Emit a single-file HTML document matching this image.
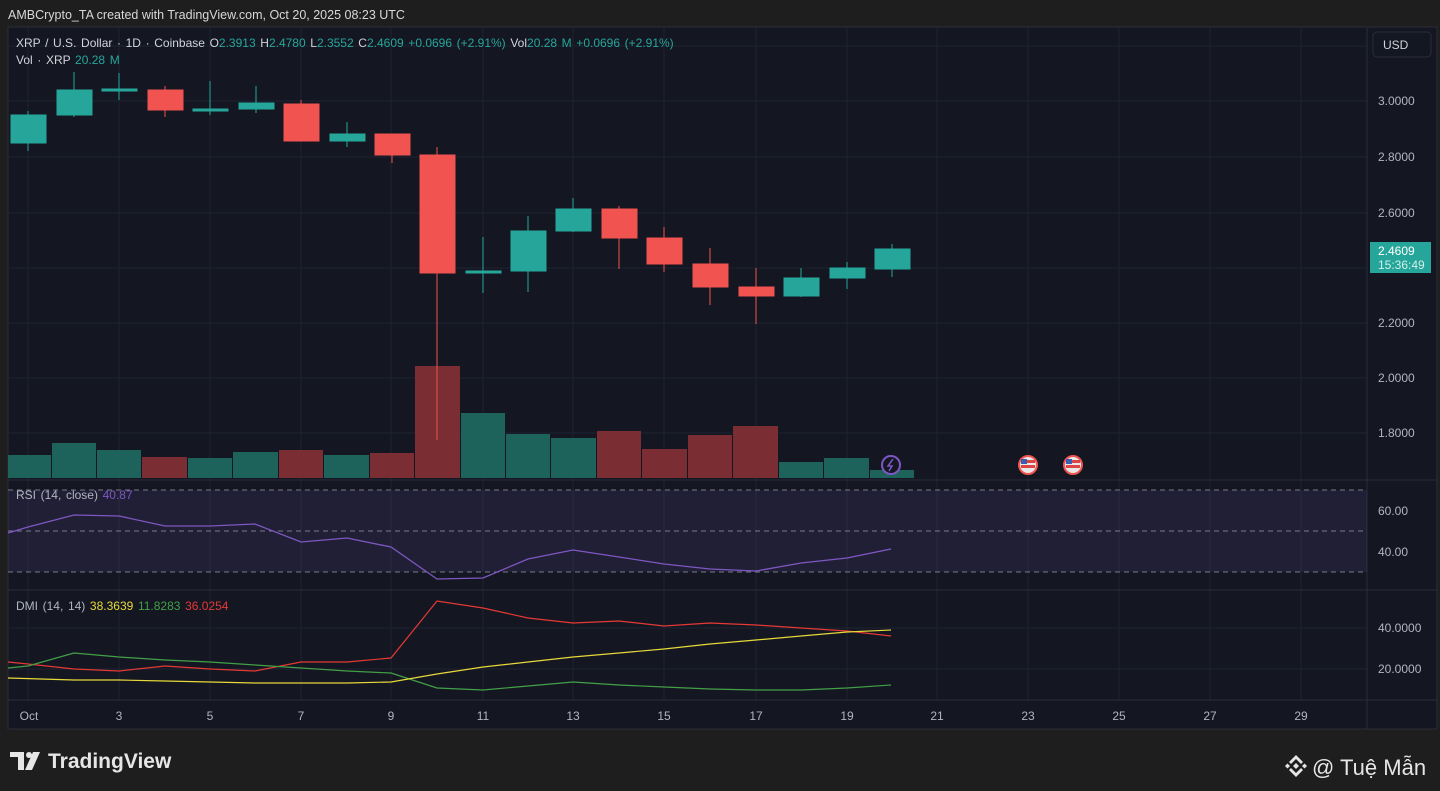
<!DOCTYPE html>
<html><head><meta charset="utf-8"><style>
html,body{margin:0;padding:0;width:1440px;height:791px;background:#1e1e1f;overflow:hidden;font-family:"Liberation Sans",sans-serif}
svg{position:absolute;left:0;top:0}
</style></head><body>
<svg width="1440" height="791" viewBox="0 0 1440 791" xmlns="http://www.w3.org/2000/svg" font-family="Liberation Sans, sans-serif">
<rect x="0" y="0" width="1440" height="791" fill="#1e1e1f"/>
<text x="8" y="19" font-size="12.5" fill="#d8d8d8">AMBCrypto_TA created with TradingView.com, Oct 20, 2025 08:23 UTC</text>
<rect x="8" y="27" width="1429" height="702" fill="#141722" stroke="#2a2d36"/>
<!-- grid -->
<g stroke="#1e2230" stroke-width="1">
<line x1="28" y1="28" x2="28" y2="700"/><line x1="119" y1="28" x2="119" y2="700"/><line x1="210" y1="28" x2="210" y2="700"/><line x1="301" y1="28" x2="301" y2="700"/><line x1="391" y1="28" x2="391" y2="700"/><line x1="483" y1="28" x2="483" y2="700"/><line x1="573" y1="28" x2="573" y2="700"/><line x1="664" y1="28" x2="664" y2="700"/><line x1="756" y1="28" x2="756" y2="700"/><line x1="847" y1="28" x2="847" y2="700"/><line x1="937" y1="28" x2="937" y2="700"/><line x1="1028" y1="28" x2="1028" y2="700"/><line x1="1119" y1="28" x2="1119" y2="700"/><line x1="1210" y1="28" x2="1210" y2="700"/><line x1="1301" y1="28" x2="1301" y2="700"/>
<line x1="8" y1="46" x2="1367" y2="46"/><line x1="8" y1="101" x2="1367" y2="101"/><line x1="8" y1="157" x2="1367" y2="157"/><line x1="8" y1="213" x2="1367" y2="213"/><line x1="8" y1="268" x2="1367" y2="268"/><line x1="8" y1="323" x2="1367" y2="323"/><line x1="8" y1="378" x2="1367" y2="378"/><line x1="8" y1="433" x2="1367" y2="433"/>
<line x1="8" y1="628" x2="1367" y2="628"/><line x1="8" y1="669" x2="1367" y2="669"/>
</g>
<g stroke="#2a2e39"><line x1="8" y1="480" x2="1437" y2="480"/><line x1="8" y1="590" x2="1437" y2="590"/><line x1="8" y1="700" x2="1437" y2="700"/><line x1="1367" y1="28" x2="1367" y2="729"/></g>
<text x="16" y="47" font-size="12" fill="#d1d4dc" word-spacing="1.3">XRP / U.S. Dollar · 1D · Coinbase <tspan>O</tspan><tspan fill="#26a69a">2.3913</tspan> H<tspan fill="#26a69a">2.4780</tspan> L<tspan fill="#26a69a">2.3552</tspan> C<tspan fill="#26a69a">2.4609 +0.0696 (+2.91%)</tspan> Vol<tspan fill="#26a69a">20.28 M +0.0696 (+2.91%)</tspan></text>
<text x="16" y="64" font-size="12" fill="#d1d4dc" word-spacing="1.3">Vol · XRP <tspan fill="#26a69a">20.28 M</tspan></text>
<rect x="1373" y="32" width="58" height="25" rx="4" fill="#131722" stroke="#2a2e39"/>
<text x="1383" y="49" font-size="12" fill="#d1d4dc">USD</text>
<g font-size="12" fill="#b2b5be">
<text x="1378" y="105">3.0000</text><text x="1378" y="161">2.8000</text><text x="1378" y="217">2.6000</text><text x="1378" y="327">2.2000</text><text x="1378" y="382">2.0000</text><text x="1378" y="437">1.8000</text>
<text x="1378" y="515">60.00</text><text x="1378" y="556">40.00</text>
<text x="1378" y="632">40.0000</text><text x="1378" y="673">20.0000</text>
</g>
<rect x="1370" y="242" width="61" height="31" fill="#26a69a"/>
<text x="1378" y="255" font-size="12" fill="#fff">2.4609</text>
<text x="1378" y="269" font-size="12" fill="#d0f0ec">15:36:49</text>
<!-- volume -->
<g>
<rect x="8" y="455" width="43" height="23" fill="#1e625c"/><rect x="52" y="443" width="44" height="35" fill="#1e625c"/><rect x="97" y="450" width="44" height="28" fill="#1e625c"/><rect x="142" y="457" width="45" height="21" fill="#7a2e33"/><rect x="188" y="458" width="44" height="20" fill="#1e625c"/><rect x="233" y="452" width="45" height="26" fill="#1e625c"/><rect x="279" y="450" width="44" height="28" fill="#7a2e33"/><rect x="324" y="455" width="45" height="23" fill="#1e625c"/><rect x="370" y="453" width="44" height="25" fill="#7a2e33"/><rect x="415" y="366" width="45" height="112" fill="#7a2e33"/><rect x="461" y="413" width="44" height="65" fill="#1e625c"/><rect x="506" y="434" width="44" height="44" fill="#1e625c"/><rect x="551" y="438" width="45" height="40" fill="#1e625c"/><rect x="597" y="431" width="44" height="47" fill="#7a2e33"/><rect x="642" y="449" width="45" height="29" fill="#7a2e33"/><rect x="688" y="435" width="44" height="43" fill="#7a2e33"/><rect x="733" y="426" width="45" height="52" fill="#7a2e33"/><rect x="779" y="462" width="44" height="16" fill="#1e625c"/><rect x="824" y="458" width="45" height="20" fill="#1e625c"/><rect x="870" y="470" width="44" height="8" fill="#1e625c"/>
</g>
<!-- candles -->
<g stroke-width="1">
<g stroke="#26a69a" fill="#26a69a">
<line x1="28" y1="111" x2="28" y2="151"/><rect x="11" y="115" width="35" height="28"/>
<line x1="74" y1="72" x2="74" y2="117"/><rect x="57" y="90" width="35" height="25"/>
<line x1="119" y1="73" x2="119" y2="100"/><rect x="102" y="89" width="35" height="2"/>
<line x1="210" y1="81" x2="210" y2="115"/><rect x="193" y="109" width="35" height="2"/>
<line x1="256" y1="86" x2="256" y2="113"/><rect x="239" y="103" width="35" height="6"/>
<line x1="347" y1="122" x2="347" y2="147"/><rect x="330" y="134" width="35" height="7"/>
<line x1="483" y1="237" x2="483" y2="293"/><rect x="466" y="271" width="35" height="2"/>
<line x1="528" y1="216" x2="528" y2="292"/><rect x="511" y="231" width="35" height="40"/>
<line x1="573" y1="198" x2="573" y2="232"/><rect x="556" y="209" width="35" height="22"/>
<line x1="801" y1="268" x2="801" y2="297"/><rect x="784" y="278" width="35" height="18"/>
<line x1="847" y1="262" x2="847" y2="289"/><rect x="830" y="268" width="35" height="10"/>
<line x1="892" y1="244" x2="892" y2="277"/><rect x="875" y="249" width="35" height="20"/>
</g>
<g stroke="#f05350" fill="#f05350">
<line x1="165" y1="86" x2="165" y2="117"/><rect x="148" y="90" width="35" height="20"/>
<line x1="301" y1="100" x2="301" y2="141"/><rect x="284" y="104" width="35" height="37"/>
<line x1="392" y1="134" x2="392" y2="163"/><rect x="375" y="134" width="35" height="21"/>
<line x1="437" y1="147" x2="437" y2="440"/><rect x="420" y="155" width="35" height="118"/>
<line x1="619" y1="206" x2="619" y2="269"/><rect x="602" y="209" width="35" height="29"/>
<line x1="664" y1="227" x2="664" y2="272"/><rect x="647" y="238" width="35" height="26"/>
<line x1="710" y1="248" x2="710" y2="305"/><rect x="693" y="264" width="35" height="23"/>
<line x1="756" y1="268" x2="756" y2="324"/><rect x="739" y="287" width="35" height="9"/>
</g>
</g>
<!-- event icons -->
<circle cx="891" cy="465" r="9" fill="#141722" stroke="#7e57c2" stroke-width="2"/><path d="M893 459 L888 466 L892 466 L889 471" stroke="#7e57c2" fill="none" stroke-width="1.5"/>
<circle cx="1028" cy="465" r="9" fill="#e8e8e8" stroke="#f05350" stroke-width="2"/><rect x="1021" y="460" width="14" height="3" fill="#d44"/><rect x="1021" y="465" width="14" height="3" fill="#d44"/><rect x="1021" y="459" width="6" height="5" fill="#3a5fb0"/>
<circle cx="1073" cy="465" r="9" fill="#e8e8e8" stroke="#f05350" stroke-width="2"/><rect x="1066" y="460" width="14" height="3" fill="#d44"/><rect x="1066" y="465" width="14" height="3" fill="#d44"/><rect x="1066" y="459" width="6" height="5" fill="#3a5fb0"/>
<!-- RSI -->
<rect x="8" y="490" width="1359" height="82" fill="#7e57c2" fill-opacity="0.12"/>
<g stroke="#787b86" stroke-dasharray="5,4" stroke-width="1"><line x1="8" y1="490" x2="1367" y2="490"/><line x1="8" y1="531" x2="1367" y2="531"/><line x1="8" y1="572" x2="1367" y2="572"/></g>
<polyline fill="none" stroke="#7e57c2" stroke-width="1.3" points="8,533 28,527 74,515 119,516 165,526 210,526 255,524 301,542 347,538 391,547 437,579 483,578 528,559 573,550 619,557 664,564 710,569 756,571 801,563 847,558 891,549"/>
<text x="16" y="499" font-size="12" fill="#b2b5be" word-spacing="1.3">RSI (14, close) <tspan fill="#7e57c2">40.87</tspan></text>
<!-- DMI -->
<text x="16" y="610" font-size="12" fill="#b2b5be" word-spacing="1.3">DMI (14, 14) <tspan fill="#e8d93a">38.3639</tspan> <tspan fill="#43a047">11.8283</tspan> <tspan fill="#e53935">36.0254</tspan></text>
<polyline fill="none" stroke="#e53935" stroke-width="1.2" points="8,662 28,664 74,669 119,671 165,666 210,669 255,671 301,662 347,662 391,658 437,601 483,608 528,618 573,623 619,621 664,626 710,623 756,625 801,628 847,631 891,636"/>
<polyline fill="none" stroke="#43a047" stroke-width="1.2" points="8,668 28,666 74,653 119,657 165,660 210,662 255,665 301,668 347,671 391,673 437,688 483,690 528,686 573,682 619,685 664,687 710,689 756,690 801,690 847,688 891,685"/>
<polyline fill="none" stroke="#e8d93a" stroke-width="1.2" points="8,678 74,680 119,680 165,681 210,682 255,683 301,683 347,683 391,682 437,674 483,667 528,662 573,657 619,653 664,649 710,644 756,640 801,636 847,632 891,630"/>
<!-- time axis -->
<g font-size="12" fill="#b2b5be" text-anchor="middle">
<text x="29" y="720">Oct</text><text x="119" y="720">3</text><text x="210" y="720">5</text><text x="301" y="720">7</text><text x="391" y="720">9</text><text x="483" y="720">11</text><text x="573" y="720">13</text><text x="664" y="720">15</text><text x="756" y="720">17</text><text x="847" y="720">19</text><text x="937" y="720">21</text><text x="1028" y="720">23</text><text x="1119" y="720">25</text><text x="1210" y="720">27</text><text x="1301" y="720">29</text>
</g>
<!-- footer -->
<path d="M10 752 H24 V770 H18 V757 H10 Z" fill="#e6e6e6"/><circle cx="29" cy="755" r="3" fill="#e6e6e6"/><path d="M33 752 H40 L32 770 H25 Z" fill="#e6e6e6"/>
<text x="48" y="768" font-size="21" font-weight="bold" fill="#e6e6e6">TradingView</text>
<g fill="#e6e6e6">
<path d="M1296 755 L1303 762 L1301 764 L1296 759 L1291 764 L1289 762 Z"/>
<path d="M1296 777 L1303 770 L1301 768 L1296 773 L1291 768 L1289 770 Z"/>
<path d="M1296 763 L1299 766 L1296 769 L1293 766 Z"/>
<path d="M1285 766 L1287.5 763.5 L1290 766 L1287.5 768.5 Z"/>
<path d="M1302 766 L1304.5 763.5 L1307 766 L1304.5 768.5 Z"/>
</g>
<text x="1312" y="775" font-size="22" fill="#e6e6e6">@ Tuệ Mẫn</text>
</svg>
</body></html>
